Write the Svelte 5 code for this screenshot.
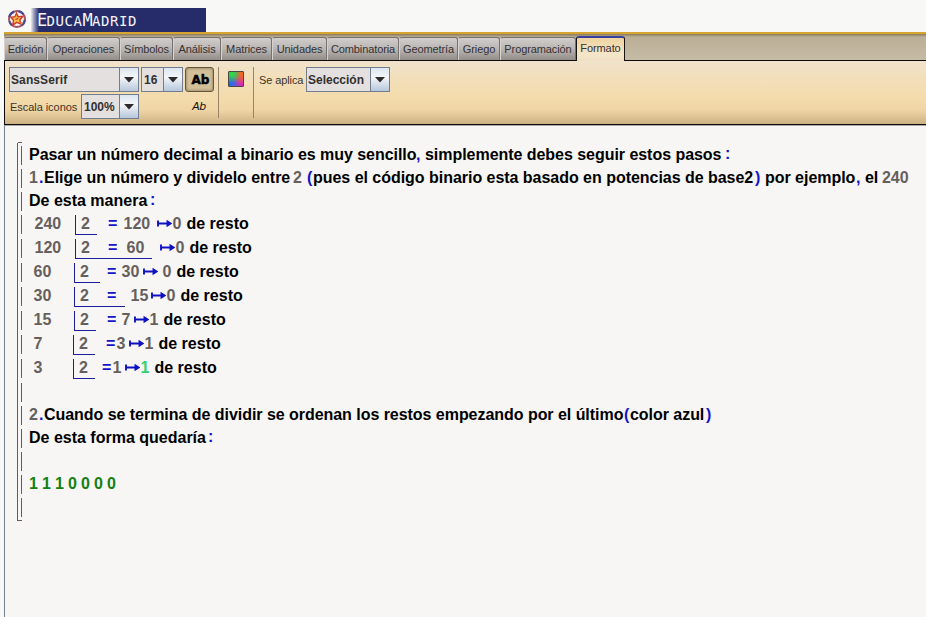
<script>
  const tabs = [
    { label: "Edición", width: 43 },
    { label: "Operaciones", width: 73 },
    { label: "Símbolos", width: 53 },
    { label: "Análisis", width: 48 },
    { label: "Matrices", width: 51 },
    { label: "Unidades", width: 55 },
    { label: "Combinatoria", width: 72 },
    { label: "Geometría", width: 59 },
    { label: "Griego", width: 42 },
    { label: "Programación", width: 76 },
    { label: "Formato", width: 49 },
  ];
  let active = "Formato";

  // each token: [text, kind, start, extra], start is measured from the sheet's left edge
  const lines = [
    { s: -0.04, tokens: [["Pasar un número decimal a binario es muy sencillo", "txt", 29], [",", "op", 416], ["simplemente debes seguir estos pasos", "txt", 425], [":", "op colon", 725]] },
    { s: -0.03, tokens: [["1", "num", 29], [".", "op", 39], ["Elige un número y dividelo entre", "txt", 44], ["2", "num", 293], ["(", "op", 307], ["pues el código binario esta basado en potencias de base2", "txt", 313], [")", "op", 755], ["por ejemplo", "txt", 765], [",", "op", 856], ["el", "txt", 865], ["240", "num", 882]] },
    { tokens: [["De esta manera", "txt", 29], [":", "op colon", 150]] },
    { math: true, tokens: [["240", "num", 35], ["2", "box", 75, 22], ["=", "op", 108], ["120", "num", 124], ["", "map", 157], ["0", "num", 173], ["de resto", "txt", 187]] },
    { math: true, tokens: [["120", "num", 35], ["2", "box", 75, 77], ["=", "op", 108], ["60", "num", 127], ["", "map", 160], ["0", "num", 176], ["de resto", "txt", 190]] },
    { math: true, tokens: [["60", "num", 34], ["2", "box", 74, 26], ["=", "op", 107], ["30", "num", 122], ["", "map", 143], ["0", "num", 163], ["de resto", "txt", 177]] },
    { math: true, tokens: [["30", "num", 34], ["2", "box", 74, 51], ["=", "op", 107], ["15", "num", 131], ["", "map", 151], ["0", "num", 167], ["de resto", "txt", 181]] },
    { math: true, tokens: [["15", "num", 34], ["2", "box", 74, 22], ["=", "op", 107], ["7", "num", 122], ["", "map", 134], ["1", "num", 150], ["de resto", "txt", 164]] },
    { math: true, tokens: [["7", "num", 34], ["2", "box", 73, 22], ["=", "op", 106], ["3", "num", 117], ["", "map", 129], ["1", "num", 145], ["de resto", "txt", 159]] },
    { math: true, tokens: [["3", "num", 34], ["2", "box", 73, 22], ["=", "op", 102], ["1", "num", 113], ["", "map", 125], ["1", "last", 141], ["de resto", "txt", 155]] },
    { tokens: [] },
    { s: -0.04, tokens: [["2", "num", 29], [".", "op", 39], ["Cuando se termina de dividir se ordenan los restos empezando por el último", "txt", 44], ["(", "op", 624], ["color azul", "txt", 630], [")", "op", 706]] },
    { tokens: [["De esta forma quedaría", "txt", 29], [":", "op colon", 208]] },
    { tokens: [] },
    { tokens: [..."1110000"].map((d, i) => [d, "result", 29 + i * 13]) },
    { tokens: [] },
  ];

  function tokenWidth(tokens, i) {
    return i + 1 < tokens.length ? tokens[i + 1][2] - tokens[i][2] : 70;
  }
</script>

{#snippet combo(value, size)}
  <button class="combo {size}">
    <span class="value">{value}</span>
    <span class="arrow"><svg width="10" height="6" viewBox="0 0 10 6"><path d="M0 0h10L5 5.5z" fill="#2c2a2a" /></svg></span>
  </button>
{/snippet}

<main>
  <header>
    <svg class="logo" width="20" height="20" viewBox="0 0 20 20">
      <circle cx="10" cy="10" r="8" fill="#fbf3ee" stroke="#a0566a" stroke-width="2" />
      <path d="M2.2 8a8 8 0 0 1 5-5.4M11.5 2.1a8 8 0 0 1 5 3.2M17.9 11a8 8 0 0 1-3.4 5.6M5 16.3a8 8 0 0 1-2.6-4" fill="none" stroke="#4a4a94" stroke-width="2.2" />
      <path d="M9.5 4.2l1.7 3.6 4.6-.4-3 3.6 1.4 4.2-4.4-1.8-4 2.6.7-4.7L4 8.2l4-.5z" fill="#f6c044" stroke="#cf3a30" stroke-width="1.4" />
      <path d="M8.6 10.6l2.6-1.4" stroke="#d8462e" stroke-width="1.4" />
      <path d="M13.5 13.5l2 1" stroke="#e8a030" stroke-width="1.4" />
    </svg>
    <div class="banner"><b>E</b>DUCA<b>M</b>ADRID</div>
  </header>

  <nav>
    {#each tabs as tab}
      <button class:active={tab.label === active} style="width: {tab.width}px" on:click={() => (active = tab.label)}>{tab.label}</button>
    {/each}
  </nav>

  <section class="toolbar">
    <div class="group">
      <div class="bar">
        {@render combo("SansSerif", "font")}
        {@render combo("16", "points")}
        <button class="bold">Ab</button>
      </div>
      <div class="bar">
        <span class="label scale">Escala iconos</span>
        {@render combo("100%", "zoom")}
        <button class="italic">Ab</button>
      </div>
    </div>
    <div class="group color">
      <button class="swatch" aria-label="Color"></button>
    </div>
    <div class="group">
      <div class="bar">
        <span class="label apply">Se aplica</span>
        {@render combo("Selección", "target")}
      </div>
    </div>
  </section>

  <section class="sheet">
    <div class="bracket">
      {#each lines as line}
        <div class="line" class:math={line.math} style="letter-spacing: {line.s ?? 0}px">
          {#each line.tokens as [text, kind, start, rule], i}
            {#if i === 0}<span class="lead" style="width: {start - 21}px"></span>{/if}
            <span class="token {kind}" style="width: {tokenWidth(line.tokens, i)}px">
              {#if kind === "map"}
                <svg width="15" height="9" viewBox="0 0 15 9"><path d="M1 1.5v6M1 4.5h12M10.5 2.5v4l3-2z" fill="#1111c4" stroke="#1111c4" stroke-width="1.9" /></svg>
              {:else}
                {#if rule}<i class="rule" style="width: {rule}px"></i>{/if}{text}
              {/if}
            </span>
          {/each}
        </div>
      {/each}
    </div>
  </section>
</main>

<style>
  :global(body) {
    margin: 0;
    background: #f7f6f5;
    overflow: hidden;
  }

  main {
    display: flex;
    flex-direction: column;
    width: 926px;
    height: 617px;
    padding-left: 4px;
    box-sizing: border-box;
    background: #f8f8f7;
    font-family: "Liberation Sans", Arial, sans-serif;
    overflow: hidden;
  }

  button {
    font-family: inherit;
    margin: 0;
    padding: 0;
    box-sizing: border-box;
    white-space: nowrap;
  }

  header {
    display: flex;
    height: 32px;
    flex: none;
  }

  .logo {
    margin: 9px 4px 0 3px;
  }

  .banner {
    margin-top: 8px;
    width: 175px;
    height: 24px;
    padding-left: 6px;
    box-sizing: border-box;
    background: linear-gradient(90deg, #e8e8ee 0, #9a9cb9 3px, #262b69 8px);
    color: #f4f4f8;
    font: 14px/24px "DejaVu Sans Mono", monospace;
    letter-spacing: 0.6px;
    white-space: nowrap;
  }

  .banner b {
    font-weight: normal;
    font-size: 17px;
    letter-spacing: -0.8px;
  }

  nav {
    display: flex;
    flex: none;
    align-items: flex-end;
    height: 29px;
    box-sizing: border-box;
    border-top: 2px solid #d5a530;
    border-bottom: 1px solid #0c0b09;
    background: linear-gradient(#8b7b5b 0, #bbae95 3px, #c6bba5 100%);
  }

  nav button {
    flex: none;
    height: 23px;
    border: 1px solid #777270;
    border-bottom: 0;
    border-left-color: #d6d2d0;
    border-radius: 3px 3px 0 0;
    background: linear-gradient(#d0cdcb, #b9b5b3 50%, #938d89);
    color: #353132;
    font-size: 11px;
    letter-spacing: -0.1px;
    line-height: 21px;
  }

  nav button.active {
    height: 25px;
    margin-bottom: -1px;
    border: 1px solid #17130f;
    border-top: 2px solid #3841a0;
    border-bottom: 0;
    background: linear-gradient(#efd49f, #f5e6cb 70%, #f1dfc2);
    line-height: 20px;
    padding-bottom: 3px;
  }

  .toolbar {
    display: flex;
    flex: none;
    height: 64px;
    padding: 6px 0 0 4px;
    box-sizing: border-box;
    border-left: 1px solid #0c0b09;
    border-bottom: 1px solid #0c0b09;
    background: linear-gradient(#f0e2cc 0, #f2dfbb 25%, #f4dbab 60%, #efd5a5 78%, #cdb283 100%);
  }

  .group {
    display: flex;
    flex-direction: column;
    gap: 2px;
    height: 51px;
  }

  .group:first-child {
    width: 209px;
  }

  .color {
    width: 34px;
    border: solid #998465;
    border-width: 0 1px;
  }

  .bar {
    display: flex;
    align-items: center;
    height: 25px;
  }

  .combo {
    display: flex;
    flex: none;
    height: 25px;
    border: 1px solid #727e8f;
    background: #e3e0df;
    color: #333030;
    font-size: 12px;
    font-weight: bold;
    text-align: left;
  }

  .combo .value {
    flex: 1;
    padding: 1px 0 0 1px;
    line-height: 23px;
  }

  .combo .arrow {
    display: flex;
    align-items: center;
    justify-content: center;
    width: 18px;
    height: 23px;
    border-left: 1px solid #727e8f;
    background: linear-gradient(#dce6f1, #f4f6f8 40%, #b6c7dc);
  }

  .font {
    width: 130px;
    margin-right: 2px;
    letter-spacing: 0.1px;
  }

  .points {
    width: 42px;
    margin-right: 2px;
  }

  .combo.points .value,
  .combo.zoom .value {
    padding-left: 2px;
  }

  .zoom {
    width: 58px;
  }

  .target {
    width: 84px;
  }

  .label {
    color: #3d3529;
    font-size: 11px;
    white-space: nowrap;
  }

  .scale {
    width: 71px;
    padding-left: 1px;
    letter-spacing: -0.05px;
  }

  .apply {
    width: 47px;
    padding-left: 5px;
    letter-spacing: -0.1px;
  }

  .bold {
    width: 29px;
    height: 25px;
    border: 1px solid #66583c;
    border-radius: 3px;
    background: #d3bf98;
    box-shadow: inset 0 0 3px #77684a;
    color: #000;
    font: bold 12px/25px "DejaVu Sans", sans-serif;
    padding-left: 2px;
    -webkit-text-stroke: 0.5px #000;
  }

  .italic {
    width: 20px;
    margin-left: 50px;
    border: 0;
    background: none;
    color: #17120c;
    font: italic 11px "DejaVu Sans", sans-serif;
    letter-spacing: -0.4px;
  }

  .swatch {
    width: 16px;
    height: 16px;
    margin: 4px 0 0 9px;
    border: 1px solid #4b4742;
    border-radius: 1px;
    background:
      radial-gradient(circle at 20% 15%, #12ef3c 0, transparent 55%),
      radial-gradient(circle at 100% 10%, #ff6a08 0, transparent 65%),
      radial-gradient(circle at 0 90%, #0a6cff 0, transparent 65%),
      radial-gradient(circle at 100% 100%, #f00cc8 0, transparent 65%),
      #a060a0;
  }

  .sheet {
    flex: 1;
    padding: 17px 0 0 12px;
    border-left: 1px solid #74828a;
    border-top: 1px solid #aaa9a7;
    box-sizing: border-box;
    background: #f7f6f5;
  }

  .bracket {
    position: relative;
    width: 904px;
    height: 378px;
    box-sizing: border-box;
    border-left: 1px solid #6b5b55;
  }

  /* short hooks closing the bracket */
  .bracket::before,
  .bracket::after {
    content: "";
    position: absolute;
    left: 0;
    width: 4px;
    height: 1px;
    background: #6b5b55;
  }

  .bracket::before {
    top: -1px;
  }

  .bracket::after {
    bottom: 0;
  }

  .line {
    display: flex;
    height: 23px;
    margin-left: 3px;
    font-size: 16px;
    font-weight: bold;
    line-height: 23px;
    color: #000;
    background: linear-gradient(#6b5b55, #6b5b55) 0 3px / 1px 19px no-repeat;
  }

  .line.math {
    height: 24px;
  }

  .lead {
    flex: none;
  }

  .token {
    position: relative;
    flex: none;
    white-space: nowrap;
  }

  .math .num,
  .math .txt,
  .math .last {
    text-indent: -0.5px;
  }

  .num,
  .box {
    color: #66605c;
  }

  .box {
    text-indent: 6px;
  }

  .op {
    color: #1414c8;
  }

  .colon {
    line-height: 21px;
  }

  .last {
    color: #35cf70;
  }

  .result {
    color: #128012;
  }

  .map svg {
    display: block;
    margin-top: 7px;
  }

  /* division bar, it may run on under the tokens that follow */
  .rule {
    position: absolute;
    left: 0;
    top: 3px;
    height: 20px;
    box-sizing: border-box;
    border-left: 1px solid #1c1c9c;
    border-bottom: 1px solid #1c1c9c;
  }
</style>
